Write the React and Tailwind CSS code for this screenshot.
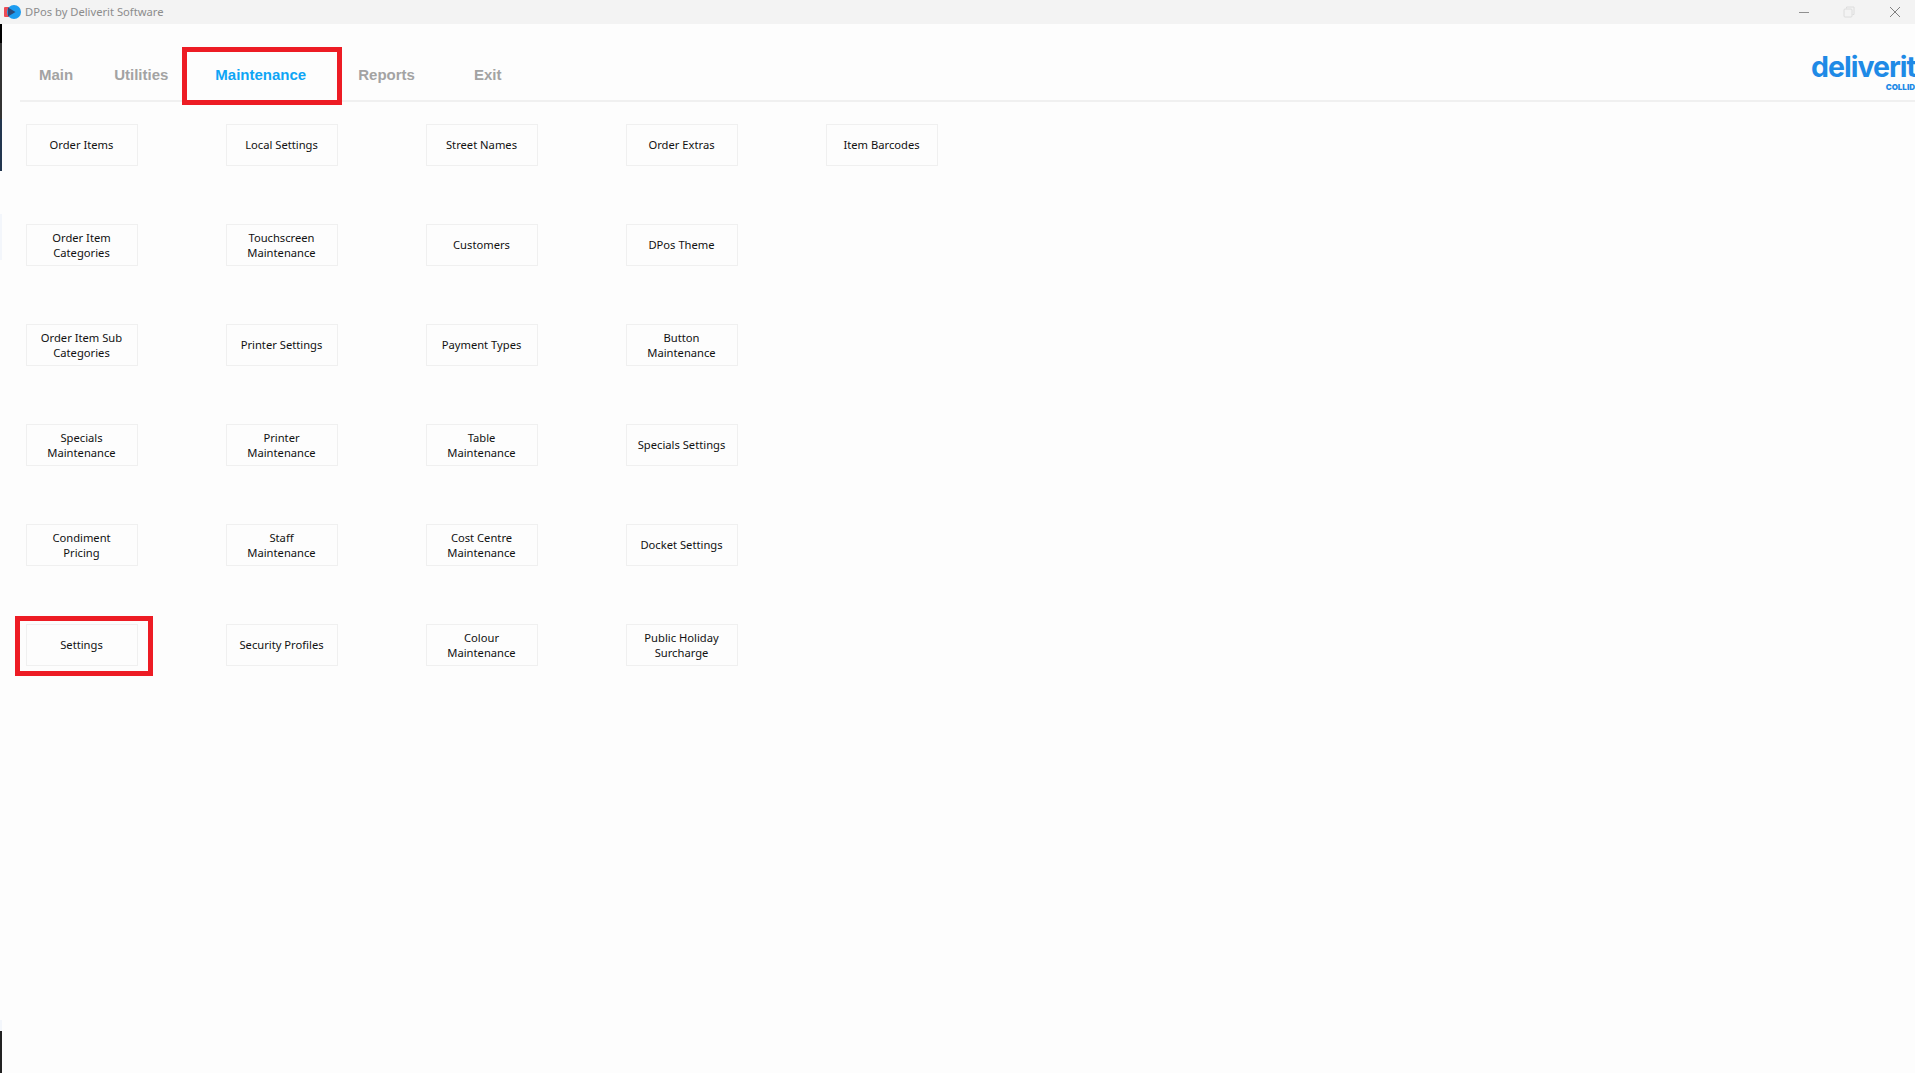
const columns = [
  ['Order Items', 'Order Item Categories', 'Order Item Sub Categories', 'Specials Maintenance', 'Condiment Pricing', 'Settings'],
  ['Local Settings', 'Touchscreen Maintenance', 'Printer Settings', 'Printer Maintenance', 'Staff Maintenance', 'Security Profiles'],
  ['Street Names', 'Customers', 'Payment Types', 'Table Maintenance', 'Cost Centre Maintenance', 'Colour Maintenance'],
  ['Order Extras', 'DPos Theme', 'Button Maintenance', 'Specials Settings', 'Docket Settings', 'Public Holiday Surcharge'],
  ['Item Barcodes'],
];

const AppIcon = () => (
  <svg width="17" height="16" viewBox="0 0 17 16" className="ml-1">
    <rect x="0" y="3" width="6" height="10" rx="1" fill="#ee4b55" />
    <circle cx="10" cy="8" r="7" fill="#1c9cf0" />
    <path d="M4 3.5 L11.5 8 L4 12.5 Z" fill="#2c4a78" />
  </svg>
);

const MaintButton = ({ label }) => (
  <div className="w-[112px] h-[42px] pl-2 pr-[9px] pb-px bg-[#fdfdfd] border border-[#f0f0f0] flex items-center justify-center text-center text-[11.2px] leading-[15px] text-[#111]">
    {label}
  </div>
);

const App = () => {
  return (
    <div className="relative w-[1915px] h-[1073px] overflow-hidden bg-[#fdfdfd] font-['Noto_Sans',sans-serif]">
      {/* Title bar */}
      <header className="h-6 bg-[#f3f3f3] flex items-center">
        <AppIcon />
        <span className="ml-[4px] text-[11.2px] text-[#8c8c8c]">DPos by Deliverit Software</span>
        <div className="ml-auto flex items-center text-[#808080]">
          <svg width="12" height="12" viewBox="0 0 12 12" className="mr-[33px]">
            <path d="M1 6.5 H11" stroke="#909090" strokeWidth="1" />
          </svg>
          <svg width="12" height="12" viewBox="0 0 12 12" className="mr-[34px]">
            <path d="M3.5 2.5 V1 H11 V8.5 H9.5" fill="none" stroke="#dcdcdc" />
            <rect x="1" y="3" width="8" height="8" rx="1" fill="none" stroke="#dcdcdc" />
          </svg>
          <svg width="12" height="12" viewBox="0 0 12 12" className="mr-[14px]">
            <path d="M1 1 L11 11 M11 1 L1 11" stroke="#808080" strokeWidth="1" />
          </svg>
        </div>
      </header>

      {/* Left edge strips from the window behind */}
      <div className="absolute left-0 top-6 w-[2px] h-[19px] bg-black" />
      <div className="absolute left-0 top-[43px] w-[2px] h-[76px] bg-[#333]" />
      <div className="absolute left-0 top-[119px] w-[2px] h-[52px] bg-[#22364f]" />
      <div className="absolute left-0 top-[214px] w-[2px] h-[46px] bg-[#f3f6fb]" />
      <div className="absolute left-0 top-[1020px] w-[2px] h-[11px] bg-[#f3f6fb]" />
      <div className="absolute left-0 top-[1031px] w-[2px] h-[42px] bg-[#222]" />

      {/* Tabs */}
      <nav className="relative ml-5 h-[78px] border-b-2 border-[#f0f0f0] flex items-center pt-[26px] font-['Liberation_Sans',sans-serif] font-bold text-[15px] text-[#a3a3a3]">
        <span className="ml-[19px]">Main</span>
        <span className="ml-[41px]">Utilities</span>
        <span className="ml-[47px] text-[#0ea5f5]">Maintenance</span>
        <span className="ml-[52px]">Reports</span>
        <span className="ml-[59px]">Exit</span>
        <div className="absolute right-0 top-[28px] w-[104px] text-right">
          <div className="font-['Inter',sans-serif] font-bold text-[#1f8ae6] text-[28.5px] leading-[30px] tracking-[-1px] whitespace-nowrap">deliverit</div>
          <div className="font-['Inter',sans-serif] font-black text-[#1f8ae6] text-[8px] leading-[8px] mt-px">COLLID</div>
        </div>
      </nav>

      {/* Button grid */}
      <main className="flex gap-[88px] ml-[26px] mt-[22px]">
        {columns.map((col) => (
          <div key={col[0]} className="flex flex-col gap-[58px]">
            {col.map((label) => (
              <MaintButton key={label} label={label} />
            ))}
          </div>
        ))}
      </main>

      {/* Red highlight boxes */}
      <div className="absolute left-[182px] top-[47px] w-[160px] h-[58px] border-[5px] border-[#ed1c24]" />
      <div className="absolute left-[15px] top-[616px] w-[138px] h-[60px] border-[5px] border-[#ed1c24]" />
    </div>
  );
};

export default App;
